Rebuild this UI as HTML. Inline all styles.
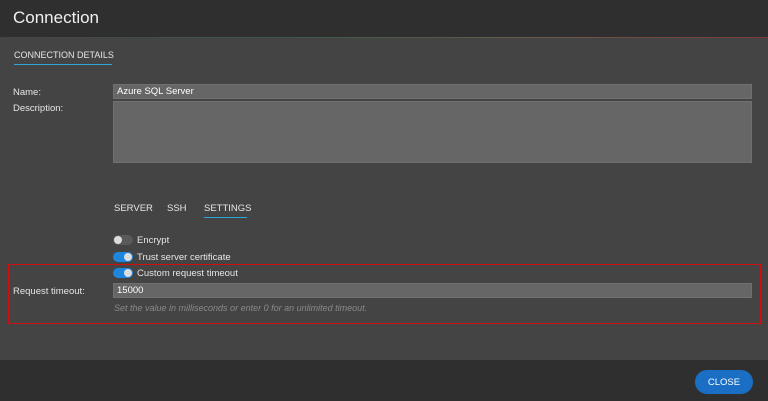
<!DOCTYPE html>
<html><head><style>
body{margin:0;width:768px;height:401px;background:#444;font-family:"Liberation Sans",sans-serif;color:#e6e6e6;position:relative;overflow:hidden;font-size:9.5px}
.a{position:absolute}
.hdr{left:0;top:0;width:768px;height:37px;background:#2f2f2f}
.line{left:0;top:37px;width:768px;height:1px;background:linear-gradient(90deg,#444 0%,#3c5a48 40%,#6a5a4a 70%,#7a3a3a 100%)}
.inp{background:#666;border:1px solid #707070;box-sizing:border-box;color:#fff;padding-left:3px}
.tg{width:20px;height:10px;border-radius:5px}
.tg i{position:absolute;top:1px;width:8px;height:8px;border-radius:50%;background:#ddd}
</style></head><body>
<div class="a hdr"></div><div class="a line"></div>
<div class="a" style="left:13px;top:8px;font-size:17px;color:#f0f0f0">Connection</div>
<div class="a" style="left:14px;top:50px;font-size:9px">CONNECTION DETAILS</div>
<div class="a" style="left:14px;top:64px;width:98px;height:1px;background:#2aa7dd"></div>
<div class="a" style="left:13px;top:87px">Name:</div>
<div class="a" style="left:13px;top:103px">Description:</div>
<div class="a inp" style="left:113px;top:84px;width:639px;height:15px;line-height:14px">Azure SQL Server</div>
<div class="a inp" style="left:113px;top:101px;width:639px;height:62px"></div>
<div class="a" style="left:114px;top:203px">SERVER</div>
<div class="a" style="left:167px;top:203px">SSH</div>
<div class="a" style="left:204px;top:203px">SETTINGS</div>
<div class="a" style="left:204px;top:217px;width:43px;height:1px;background:#2aa7dd"></div>
<div class="a tg" style="left:113px;top:235px;background:#5a5a5a"><i style="left:1px"></i></div>
<div class="a" style="left:137px;top:235px">Encrypt</div>
<div class="a tg" style="left:113px;top:252px;background:#1f86e0"><i style="left:11px"></i></div>
<div class="a" style="left:137px;top:252px">Trust server certificate</div>
<div class="a tg" style="left:113px;top:268px;background:#1f86e0"><i style="left:11px"></i></div>
<div class="a" style="left:137px;top:268px">Custom request timeout</div>
<div class="a" style="left:8px;top:264px;width:753px;height:60px;box-sizing:border-box;border:1px solid #d01010"></div>
<div class="a" style="left:13px;top:286px">Request timeout:</div>
<div class="a inp" style="left:113px;top:283px;width:639px;height:15px;line-height:14px">15000</div>
<div class="a" style="left:114px;top:303px;font-style:italic;color:#8a8a8a;font-size:9px">Set the value in milliseconds or enter 0 for an unlimited timeout.</div>
<div class="a" style="left:0;top:360px;width:768px;height:41px;background:#2f2f2f"></div>
<div class="a" style="left:695px;top:370px;width:58px;height:24px;border-radius:12px;background:#1a6fc4;color:#fff;font-size:9.5px;text-align:center;line-height:25px">CLOSE</div>
</body></html>
